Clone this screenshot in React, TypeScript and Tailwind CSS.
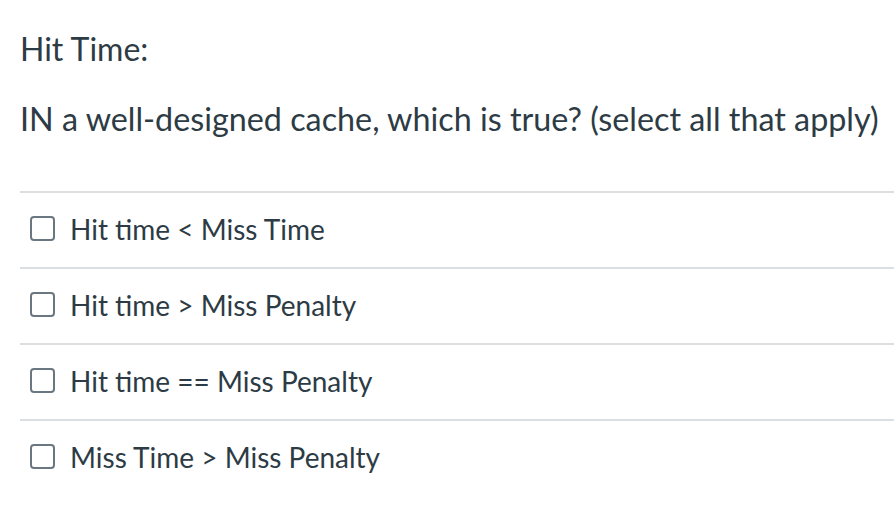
const options = [
  "Hit time < Miss Time",
  "Hit time > Miss Penalty",
  "Hit time == Miss Penalty",
  "Miss Time > Miss Penalty",
];

export default function App() {
  return (
    <div
      className="min-h-screen bg-white pl-5 text-[#2d3b45]"
      style={{ fontFamily: "Lato, 'Noto Sans', sans-serif" }}
    >
      <p className="pt-[26px] text-[32px] leading-[45px]">Hit Time:</p>
      <p className="mt-[25px] text-[32.3px] leading-[45px]">
        IN a well-designed cache, which is true? (select all that apply)
      </p>
      <div className="mt-[50px]">
        {options.map((text) => (
          <label
            key={text}
            className="flex h-[76px] items-center gap-[15px] border-t-2 border-[#dcdfe1] pb-[3px] pl-[10px]"
          >
            <input
              type="checkbox"
              className="h-[25px] w-[25px] appearance-none rounded-[4px] border-2 border-[#6b7780] bg-white"
            />
            <span className="text-[28px]">{text}</span>
          </label>
        ))}
      </div>
    </div>
  );
}
